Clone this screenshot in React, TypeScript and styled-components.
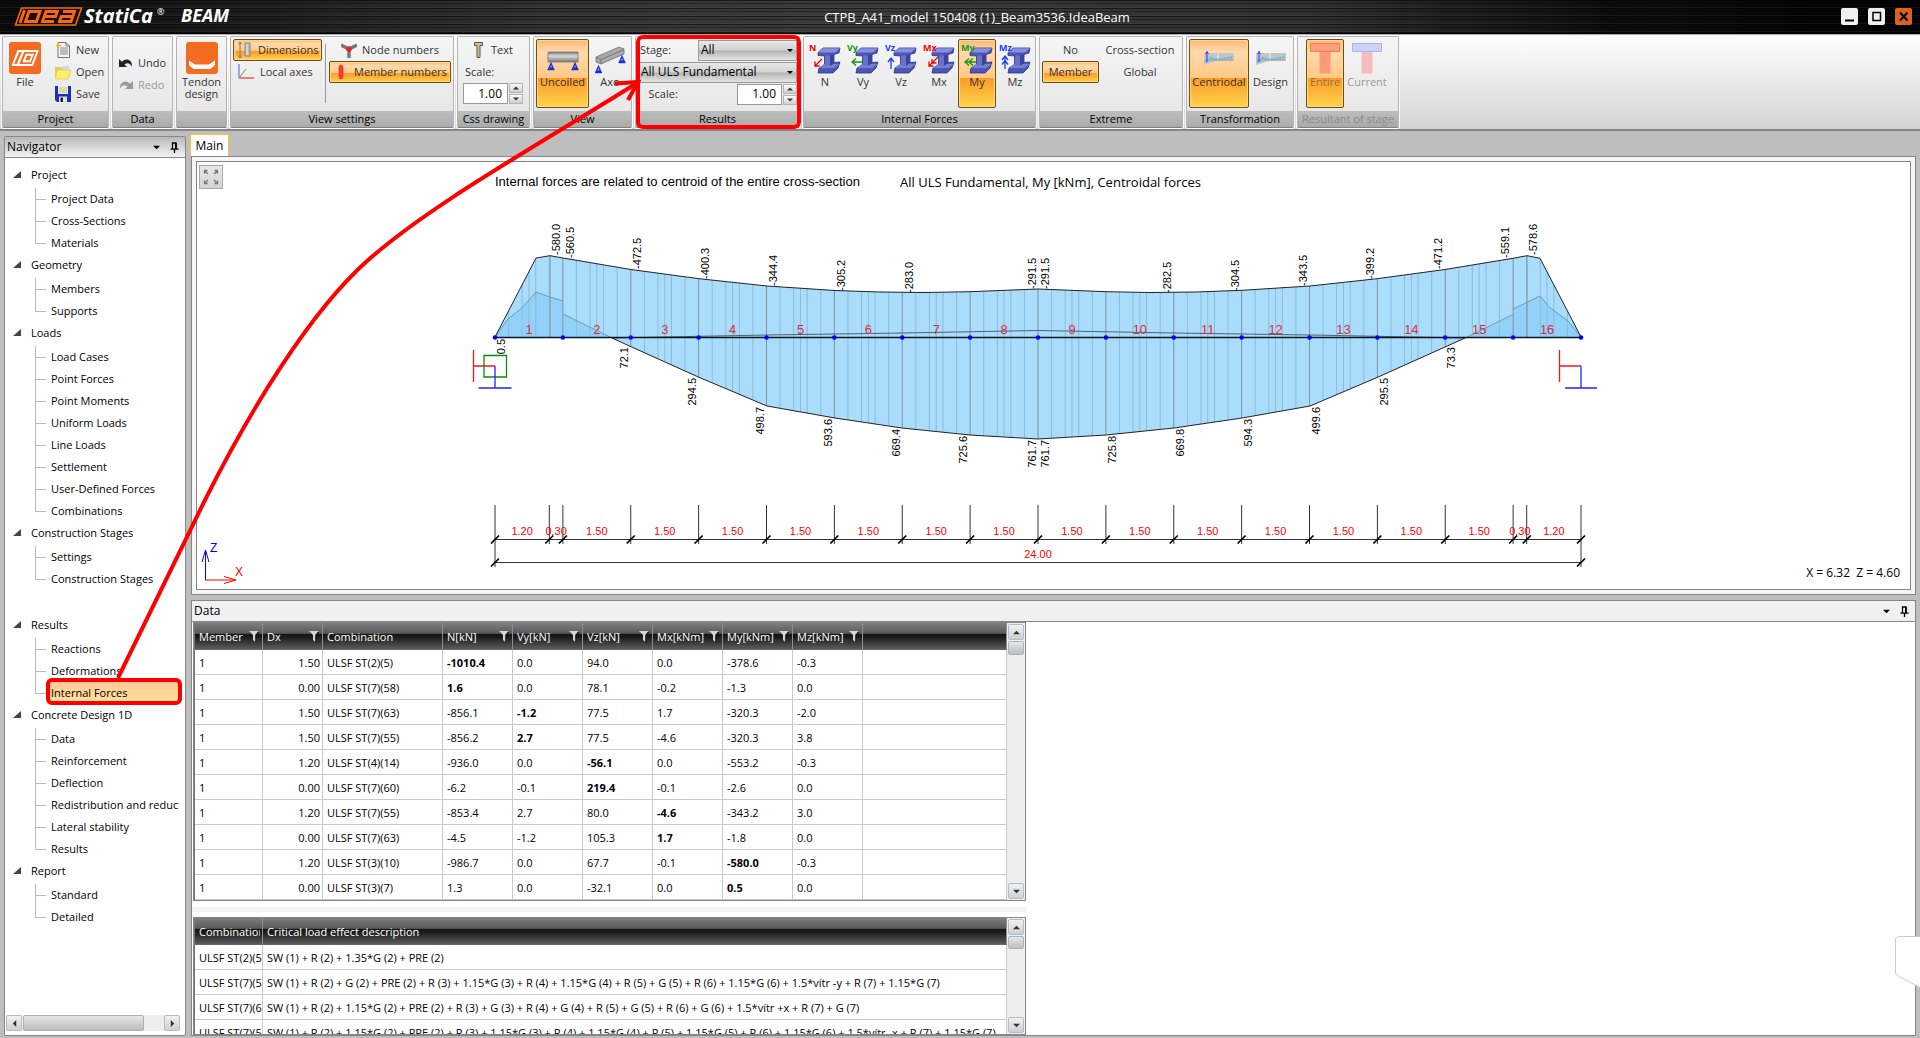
import React from "react";
import styled, { createGlobalStyle, css } from "styled-components";

const ui = `"Segoe UI", "Open Sans", "Noto Sans", sans-serif`;
const plain = `"Liberation Sans", Arial, sans-serif`;
const line = "#868686";

const Global = createGlobalStyle`
  *, *::before, *::after { box-sizing: border-box; }
  body { margin: 0; background: #bebebe; font: 12px/16px ${ui}; color: #000; }
  button, input, select { font: inherit; color: inherit; margin: 0; padding: 0; border: 0; background: none; border-radius: 0; }
  ul, h2 { margin: 0; padding: 0; list-style: none; font: inherit; }
`;

const Window = styled.div`
  position: relative;
  display: flex;
  flex-direction: column;
  height: 100vh;
  overflow: hidden;
`;

/* ---------- title bar ---------- */
const TitleBar = styled.header`
  flex: none;
  display: grid;
  grid-template-columns: 1fr auto 1fr;
  align-items: center;
  height: 34px;
  padding: 0 8px 0 14px;
  border-bottom: 1px solid #000;
  color: #fff;
  background:
    repeating-linear-gradient(180deg, rgba(0,0,0,.55) 0 1px, transparent 1px 3px, rgba(0,0,0,.35) 3px 4px, transparent 4px 7px, rgba(120,120,120,.12) 7px 8px),
    linear-gradient(90deg, #0a0a0a 0%, #1c1c1c 12%, #343434 30%, #3b3b3b 45%, #333 60%, #303030 68%, #0c0c0c 84%, #020202 100%);
`;
const Brand = styled.div`
  display: flex;
  align-items: center;
  height: 33px;
  svg { overflow: visible; }
`;
const FileName = styled.div`
  padding-left: 28px;
  font-size: 13px;
  white-space: nowrap;
`;
const WindowButtons = styled.div`
  display: flex;
  justify-content: flex-end;
  gap: 10px;
`;
const WindowButton = styled.button<{ $close?: boolean }>`
  width: 17px;
  height: 17px;
  border-radius: 2px;
  background: ${(p) => (p.$close ? "#dc6120" : "#f0f0f0")};
  svg { display: block; }
`;

/* ---------- ribbon ---------- */
const Ribbon = styled.nav`
  flex: none;
  display: flex;
  gap: 3px;
  height: 97px;
  padding: 1px 2px 2px;
  border-top: 1px solid #aaa;
  border-bottom: 2px solid #858585;
  background: linear-gradient(#fff, #d4d4d4);
`;
const Group = styled.section<{ $w: number }>`
  display: flex;
  flex-direction: column;
  flex: none;
  width: ${(p) => p.$w}px;
  height: 92px;
  border: 1px solid #b4b4b4;
  border-bottom-color: #808080;
  border-radius: 2px;
  box-shadow: 0 0 0 1px #fafafa;
  background: linear-gradient(#f5f5f5, #e6e4e4);
`;
const GroupBody = styled.div<{ $pad?: string }>`
  display: flex;
  flex: 1;
  min-height: 0;
  padding: ${(p) => p.$pad || "2px"};
`;
const GroupLabel = styled.h2<{ $off?: boolean }>`
  flex: none;
  height: 16px;
  font-size: 11px;
  text-align: center;
  white-space: nowrap;
  color: ${(p) => (p.$off ? "#8a8a8a" : "#000")};
  background: linear-gradient(#bcbebd, #a9abaa);
`;
const active = css`
  border-color: #6a4d25;
  box-shadow: inset 0 0 0 1px #ffd97a;
  background: linear-gradient(#f7b878 0, #ffd9ae 18%, #ffca85 56%, #ff9a26 57%, #ffd54c 100%);
`;
const BigButton = styled.button<{ $w: number; $on?: boolean; $off?: boolean }>`
  display: flex;
  flex-direction: column;
  align-items: center;
  flex: none;
  width: ${(p) => p.$w}px;
  height: 69px;
  padding-top: 2px;
  border: 1px solid transparent;
  border-radius: 2px;
  font-size: 11px;
  line-height: 12px;
  color: ${(p) => (p.$off ? (p.$on ? "#94723f" : "#999") : "#333")};
  ${(p) => p.$on && active}
  svg { display: block; width: 32px; height: 32px; margin-bottom: 2px; flex: none; overflow: visible; }
`;
const SmallButton = styled.button<{ $on?: boolean; $off?: boolean; $center?: boolean }>`
  display: flex;
  align-items: center;
  justify-content: ${(p) => (p.$center ? "center" : "flex-start")};
  gap: 5px;
  height: 22px;
  padding: 0 3px;
  border: 1px solid transparent;
  border-radius: 2px;
  font-size: 11px;
  white-space: nowrap;
  color: ${(p) => (p.$off ? "#999" : "#333")};
  ${(p) => p.$on && active}
  svg { display: block; flex: none; }
`;
const Stack = styled.div<{ $w?: number; $center?: boolean }>`
  display: flex;
  flex-direction: column;
  flex: none;
  ${(p) => p.$w && `width: ${p.$w}px;`}
  ${(p) => p.$center && "justify-content: center;"}
`;
const Rule = styled.div`
  width: 1px;
  height: 59px;
  margin: 5px 3px 0;
  background: #999;
`;
const Line = styled.div`
  display: flex;
  align-items: center;
  justify-content: space-between;
  height: 22px;
`;
const FieldLabel = styled.label`
  padding-left: 2px;
  font-size: 11px;
  color: #333;
`;
const SpinBox = styled.div`
  display: flex;
  gap: 1px;
  height: 21px;
`;
const NumberInput = styled.input`
  width: 45px;
  padding-right: 5px;
  border: 1px solid #999;
  background: #fff;
  text-align: right;
`;
const Spinners = styled.div`
  display: flex;
  flex-direction: column;
  gap: 1px;
`;
const Spin = styled.button`
  display: grid;
  place-items: center;
  width: 14px;
  height: 10px;
  border: 1px solid #b5b5b5;
  background: linear-gradient(#fafafa, #cfcfcf);
`;
const SelectBox = styled.div<{ $w: number }>`
  position: relative;
  width: ${(p) => p.$w}px;
  height: 21px;
  select {
    appearance: none;
    width: 100%;
    height: 100%;
    padding-left: 2px;
    border: 1px solid #999;
    background: linear-gradient(#e8e8e8 0, #d2d2d2 48%, #b4b4b4 52%, #e4e4e4 100%);
  }
  &::after {
    content: "";
    position: absolute;
    right: 4px;
    top: 9px;
    border: 3px solid transparent;
    border-top-color: #000;
    pointer-events: none;
  }
`;

/* ---------- workspace ---------- */
const Workspace = styled.div`
  display: flex;
  flex: 1;
  min-height: 0;
  gap: 5px;
  padding: 3px 4px 2px 4px;
`;
const Navigator = styled.aside`
  display: flex;
  flex-direction: column;
  flex: none;
  width: 182px;
  margin-top: 2px;
  border: 1px solid ${line};
  border-radius: 2px;
  background: #fff;
`;
const PanelHead = styled.div<{ $dark?: boolean }>`
  display: flex;
  align-items: center;
  flex: none;
  gap: 10px;
  height: 21px;
  padding: 0 6px 0 2px;
  border-bottom: 1px solid ${line};
  background: ${(p) => (p.$dark ? "linear-gradient(#b8b8b8, #f4f4f4)" : "#f0f0f0")};
  h2 { flex: 1; }
`;
const HeadButton = styled.button`
  display: block;
  svg { display: block; }
`;
const Tree = styled.ul`
  flex: 1;
  min-height: 0;
  padding-top: 6px;
  overflow: hidden;
`;
const Branch = styled.li<{ $space?: boolean }>`
  margin-top: ${(p) => (p.$space ? 24 : 0)}px;
`;
const BranchTitle = styled.div`
  display: flex;
  align-items: center;
  gap: 10px;
  height: 24px;
  padding: 0 0 2px 8px;
  font-size: 11px;
  svg { display: block; }
`;
const Leaf = styled.li<{ $on?: boolean }>`
  display: flex;
  align-items: center;
  height: 22px;
  margin-left: 30px;
  border-left: 1px solid #bbb;
  font-size: 11px;
  white-space: nowrap;
  overflow: hidden;
  &::before { content: ""; width: 10px; height: 1px; background: #bbb; flex: none; }
  &:last-child {
    border-left: 0;
    background: linear-gradient(#bbb, #bbb) 0 0 / 1px 11px no-repeat;
    &::before { width: 11px; }
  }
  a {
    flex: 1;
    height: 22px;
    margin: 0 6px 0 1px;
    padding-left: 4px;
    line-height: 21px;
    color: #000;
    text-decoration: none;
    overflow: hidden;
    background: ${(p) => (p.$on ? "linear-gradient(#ffc999, #ffe599)" : "none")};
  }
`;
const HScroll = styled.div`
  display: flex;
  flex: none;
  gap: 1px;
  height: 16px;
  margin: 0 5px 4px 1px;
  background: #eee;
`;
const VScroll = styled.div`
  display: flex;
  flex-direction: column;
  flex: none;
  gap: 1px;
  width: 18px;
  padding: 1px;
  background: #eee;
`;
const ScrollButton = styled.button`
  display: grid;
  place-items: center;
  flex: none;
  width: 16px;
  height: 16px;
  border: 1px solid #b0bccf;
  border-radius: 2px;
  background: linear-gradient(#f2f2f2, #cfcfcf);
`;
const Thumb = styled.div<{ $w: number; $h: number }>`
  width: ${(p) => p.$w}px;
  height: ${(p) => p.$h}px;
  border: 1px solid #a9b1bf;
  border-radius: 2px;
  background: linear-gradient(#e6e6e6, #bdbdbd);
`;
const Spacer = styled.div`
  flex: 1;
`;

const Content = styled.main`
  display: flex;
  flex-direction: column;
  flex: 1;
  min-width: 0;
`;
const Tab = styled.button`
  flex: none;
  align-self: flex-start;
  width: 39px;
  height: 22px;
  margin-left: -1px;
  border: 1px solid #fac42d;
  border-bottom: 0;
  border-radius: 2px 2px 0 0;
  background: #fff;
`;
const MainPanel = styled.section`
  display: flex;
  flex: 1;
  min-height: 0;
  padding: 4px;
  border: 1px solid ${line};
  background: #f6f6f6;
`;
const Canvas = styled.div`
  position: relative;
  flex: 1;
  min-width: 0;
  border: 1px solid ${line};
  background: #fff;
  overflow: hidden;
  > svg { display: block; width: 100%; height: 100%; }
`;
const FitButton = styled.button`
  position: absolute;
  left: 2px;
  top: 3px;
  width: 24px;
  height: 24px;
  border: 1px solid #aaa;
  background: linear-gradient(#e8e8e8, #d4d4d4);
  svg { display: block; margin: auto; }
`;
const Coordinates = styled.output`
  position: absolute;
  right: 10px;
  bottom: 8px;
  white-space: pre;
`;
const DataPanel = styled.section`
  display: flex;
  flex-direction: column;
  flex: none;
  height: 436px;
  margin-top: 5px;
  border: 1px solid ${line};
  background: #fff;
`;
const Grids = styled.div`
  display: flex;
  flex-direction: column;
  flex: 1;
  min-height: 0;
  width: 835px;
`;
const GridFrame = styled.div<{ $h?: number }>`
  display: flex;
  flex: ${(p) => (p.$h ? `0 0 ${p.$h}px` : "1")};
  min-height: 0;
  margin: 0 1px;
  border: 1px solid ${line};
`;
const Clip = styled.div`
  flex: 1;
  min-width: 0;
  overflow: hidden;
  border-left: 1px solid #777;
`;
const Splitter = styled.div`
  flex: none;
  height: 5px;
  margin: 6px 0 5px;
  background: #f4f4f4;
`;
const Table = styled.table`
  width: 100%;
  table-layout: fixed;
  border-collapse: separate;
  border-spacing: 0;
  font-size: 11px;
`;
const Th = styled.th<{ $w?: number }>`
  ${(p) => p.$w && `width: ${p.$w}px;`}
  height: 27px;
  padding: 1px 2px 0 4px;
  border-right: 1px solid #8e8e8e;
  border-bottom: 1px solid #666;
  color: #fff;
  font-weight: 400;
  text-align: left;
  white-space: nowrap;
  overflow: hidden;
  background: linear-gradient(#7e7e7e 0, #5a5a5a 40%, #141414 42%, #1c1c1c 55%, #5c5c5c 100%);
`;
const HeadCell = styled.div`
  display: flex;
  align-items: center;
  justify-content: space-between;
  overflow: hidden;
  svg { flex: none; }
`;
const Td = styled.td<{ $right?: boolean; $strong?: boolean }>`
  height: 25px;
  padding: 2px 2px 0 4px;
  border-right: 1px solid #c9c9c9;
  border-bottom: 1px solid #c9c9c9;
  text-align: ${(p) => (p.$right ? "right" : "left")};
  font-weight: ${(p) => (p.$strong ? 700 : 400)};
  white-space: nowrap;
  overflow: hidden;
`;
const Markup = styled.svg`
  position: absolute;
  left: 0;
  top: 0;
  pointer-events: none;
`;
const SideTab = styled.svg`
  position: absolute;
  right: 0;
  bottom: 50px;
`;

/* ---------- icons ---------- */
const Tri = ({ d = "down", s = 7, c = "#333" }: { d?: string; s?: number; c?: string }) => {
  const paths: Record<string, string> = { down: "M0 2H8L4 6Z", up: "M0 6H8L4 2Z", left: "M6 0V8L2 4Z", right: "M2 0V8L6 4Z" };
  return <svg width={s} height={s} viewBox="0 0 8 8"><path d={paths[d]} fill={c} /></svg>;
};
const Pin = () => (
  <svg width="9" height="11" viewBox="0 0 9 11"><path d="M2.5 7V1H6V7M0.5 7.2H8.5M4.5 7V11" fill="none" stroke="#000" strokeWidth="1.3" /><path d="M5 1H6.8V7H5Z" fill="#000" /></svg>
);
const FunnelIcon = () => (
  <svg width="11" height="12" viewBox="0 0 11 12"><path d="M1 1H10.5L7.2 5V12L5 10V5Z" fill="#111" /><path d="M0 0H9.5L6.2 4V11L4 9V4Z" fill="#d5d5d5" /></svg>
);
const Logo = () => (
  <svg width="222" height="33" viewBox="14 0 222 33">
    <path d="M21.5 8H81.5L75.5 25H15.5Z" fill="#180800" stroke="#f36a10" strokeWidth="1.6" />
    <g fill="none" stroke="#f36a10" strokeWidth="3" strokeLinejoin="miter">
      <path d="M24.5 10L20 23" />
      <path d="M29 11.5H40L36.5 21.5H25.5Z" />
      <path d="M43.5 16.5H55.5L57.2 11.5H46L42.5 21.5H54" />
      <path d="M63 11.5H74.5L71 21.5H59.5L61.2 16.5H72" />
    </g>
    <text x="84" y="23" fontFamily={ui} fontSize="20" fontWeight="700" fontStyle="italic" fill="#fff">StatiCa</text>
    <text x="157" y="15" fontFamily={ui} fontSize="9" fill="#fff">®</text>
    <text x="181" y="22" fontFamily={ui} fontSize="18" fontWeight="700" fontStyle="italic" fill="#fff">BEAM</text>
  </svg>
);
const FileIcon = () => (
  <svg viewBox="0 0 32 32"><rect width="32" height="32" rx="3" fill="#f36c21" /><path d="M8.5 8H30L24 24H2.5Z" fill="#fff" /><path d="M10.3 10L5.2 22H7.8L12.8 10Z" fill="#f36c21" /><path d="M15.2 10H27.3L22.7 22H10.3Z" fill="#f36c21" /><path d="M17.4 12.8H23.6L21 19.3H14.8Z" fill="#f36c21" stroke="#fff" strokeWidth="2" /></svg>
);
const TendonIcon = () => (
  <svg viewBox="0 0 32 32"><rect width="32" height="32" rx="3" fill="#f36c21" /><path d="M3 18.5L9 22.5H23L29 18.5V23L24.5 27H7.5L3 23Z" fill="#fff" /></svg>
);
const NewIcon = () => (
  <svg width="16" height="16" viewBox="0 0 16 16"><path d="M3 .5H11L14.5 4V15.5H3Z" fill="#f6f6f6" stroke="#777" /><path d="M5 6H13M5 8H13M5 10H13M5 12H13" stroke="#888" /><path d="M11 .5V4H14.5" fill="none" stroke="#777" /><path d="M3.5 0L4.5 2.5L7 3.5L4.5 4.5L3.5 7L2.5 4.5L0 3.5L2.5 2.5Z" fill="#ffae2b" /></svg>
);
const OpenIcon = () => (
  <svg width="16" height="16" viewBox="0 0 16 16"><path d="M0 3H6L7 4H14V14H0Z" fill="#e5cf5a" /><path d="M7 2H14V6H7Z" fill="#d8d8ec" /><path d="M2.5 6H16L13 15H0Z" fill="#fdf06a" stroke="#d8c24b" strokeWidth=".6" /></svg>
);
const SaveIcon = () => (
  <svg width="16" height="16" viewBox="0 0 16 16"><path d="M0 0H16V16H2L0 14Z" fill="#1b2fc4" /><path d="M3 0H13V8H3Z" fill="#f1ecc9" /><path d="M4 2H12M4 4H12M4 6H12" stroke="#b9b49a" strokeWidth=".7" /><path d="M4 10.5H12V16H4Z" fill="#e4e4e4" /><path d="M5.5 11.5H8V16H5.5Z" fill="#222" /></svg>
);
const UndoIcon = ({ flip }: { flip?: boolean }) => (
  <svg width="14" height="12" viewBox="0 0 14 12"><g transform={flip ? "matrix(-1 0 0 1 14 0)" : undefined} fill={flip ? "#9a9a9a" : "#222"}><path d="M0 2V10H8L5.5 7.6C8 5.5 11 6 12.5 9.5C14.5 4.5 8 -.5 3 4.8Z" /></g></svg>
);
const DimIcon = () => (
  <svg width="16" height="18" viewBox="0 0 16 18"><path d="M3 1V17M1 3.5L3 1L5 3.5M1 14.5L3 17L5 14.5" fill="none" stroke="#777" /><path d="M8 2H13V15H8Z" fill="#b8bcc0" stroke="#888" /><path d="M10 3V14" stroke="#eee" /></svg>
);
const AxesIcon = () => (
  <svg width="18" height="16" viewBox="0 0 18 16"><path d="M2 0V14" stroke="#8080ff" strokeWidth="1.4" /><path d="M2 14H17" stroke="#e33" strokeWidth="1.2" /><path d="M2 14L9 5" stroke="#6b6" strokeWidth="1.2" /></svg>
);
const NodeIcon = () => (
  <svg width="16" height="16" viewBox="0 0 16 16"><path d="M0 3L8 7L16 3M8 7V16" fill="none" stroke="#777" strokeWidth="3.4" /><circle cx="8" cy="7" r="2.8" fill="#f02020" /></svg>
);
const MemberIcon = () => (
  <svg width="16" height="16" viewBox="0 0 16 16"><rect x="6" y="1" width="4" height="14" rx="2" fill="#ff3b2b" stroke="#d22" strokeWidth=".6" /></svg>
);
const TextIcon = () => (
  <svg width="9" height="16" viewBox="0 0 9 16"><path d="M.5 .5H8.5V3.5H6V15.5H3V3.5H.5Z" fill="#d9bf8c" stroke="#555" /></svg>
);
const Foot = ({ x, y }: { x: number; y: number }) => (
  <g transform={`translate(${x} ${y})`} fill="none" stroke="#1c2fe0" strokeWidth="1.5"><path d="M3.5 .5L1.5 5H5.5Z M0 6.5H7" /></g>
);
const UncoiledIcon = () => (
  <svg viewBox="0 0 32 32"><defs><linearGradient id="pipe" x1="0" x2="0" y1="0" y2="1"><stop offset="0" stopColor="#777" /><stop offset=".4" stopColor="#ddd" /><stop offset="1" stopColor="#777" /></linearGradient></defs><path d="M1 10H31V20H1Z" fill="url(#pipe)" stroke="#777" strokeWidth=".8" /><Foot x={0.5} y={21} /><Foot x={24.5} y={21} /></svg>
);
const AxoIcon = () => (
  <svg viewBox="0 0 32 32"><path d="M2 15L25 5L30 7V12L7 22L2 20Z" fill="#a9a9a9" stroke="#666" strokeWidth=".7" /><path d="M2 15L7 17.5L30 7.5M7 17.5V22" fill="none" stroke="#666" strokeWidth=".7" /><Foot x={24.5} y={14} /><Foot x={1} y={24} /></svg>
);
const arrows: Record<string, React.ReactNode> = {
  diag: <path d="M13 17L6 24M6 19.5V24H10.5" />,
  diag2: <path d="M15 15L6 24M6 19.5V24H10.5M9 17V21H13.5" />,
  left: <path d="M16 20H5M9 16.5L5 20L9 23.5" />,
  left2: <path d="M16 20H4M8 16.5L4 20L8 23.5M12 16.5L8 20L12 23.5" />,
  up: <path d="M6 27V16M3 20L6 16L9 20" />,
  up2: <path d="M6 27V14M3 18L6 14L9 18M3 22.5L6 18.5L9 22.5" />,
};
const ForceIcon = ({ n, c, a }: { n: string; c: string; a: string }) => (
  <svg viewBox="0 0 32 32">
    <path d="M9 10.5L14 6H31L30 11L25 12.5V20.5L31 20L29 26L24 31H9L10 26L15.5 22.5V14L9 13.5Z" fill="#4c56b4" stroke="#2c3488" strokeWidth=".8" />
    <path d="M9 10.5L14 6.2H31L26 10.5Z" fill="#8690de" />
    <path d="M10 26L15 22H30.500L25.500 26Z" fill="#7680d2" />
    <path d="M16 13.500H21V24H16Z" fill="#6872c8" />
    <path d="M21 13.500L25 12V21L21 24Z" fill="#39429c" />
    <text x="0" y="9" fontFamily={ui} fontSize="9" fontWeight="700" fill={c}>{n}</text>
    <g fill="none" stroke={c} strokeWidth="1.3">{arrows[a]}</g>
  </svg>
);
const StressIcon = () => (
  <svg viewBox="0 0 32 32"><path d="M1 11H31V19L15 18.5L1 23Z" fill="#c4c4c4" /><path d="M15 11V19" stroke="#eee" /><path d="M2 18H30" stroke="#e66" strokeWidth=".7" /><path d="M2 20L8 16L15 18L30 15" fill="none" stroke="#3cc8ea" strokeWidth="2.2" strokeDasharray="2 1" /><path d="M4 20V9.500M2.500 12L4 9.500L5.500 12" fill="none" stroke="#33f" /></svg>
);
const TeeIcon = ({ top, web, edge }: { top: string; web: string; edge: string }) => (
  <svg viewBox="0 0 32 32"><path d="M11 9H21V31H11Z" fill={web} stroke={web} /><path d="M1.5 1.5H30.5V9.5H1.5Z" fill={top} stroke={edge} /></svg>
);
const FitIcon = () => (
  <svg width="16" height="16" viewBox="0 0 16 16" fill="none" stroke="#777" strokeWidth="1.3"><path d="M5 5L1.500 1.500M1.500 4.500V1.500H4.500M11 5L14.500 1.500M11.500 1.500H14.500V4.500M5 11L1.500 14.500M1.500 11.500V14.500H4.500M11 11L14.500 14.500M14.500 11.500V14.500H11.500" /></svg>
);

/* ---------- moment diagram ---------- */
type P = [number, number];
const X0 = 495;
const M = 45.25;
const axisY = 337.5;
const upper: P[] = [[495,337],[536,258],[550,255.7],[563,258],[631,269.5],[699,278.7],[767,286],[835,290.5],[880,292],[925,292.5],[970,291.7],[1038,289],[1106,291.7],[1150,292.5],[1196,292],[1242,290.3],[1310,286],[1377,278.7],[1445,269.5],[1513,258.3],[1527,255.7],[1540,258.3],[1581,337]];
const lower: P[] = [[495,337.5],[612,338],[631,346.7],[699,377.3],[767,406],[835,418],[902,428],[970,435],[1038,439],[1106,435],[1174,428],[1242,418],[1310,406],[1377,377.5],[1445,347],[1465,338],[1581,337.5]];
const leftMin: P[] = [[495,337],[508,319],[522,308],[536,292],[550,297],[563,301]];
const leftTail: P[] = [[563,314],[612,338]];
const rightTail: P[] = [[1465,338],[1513,314.5]];
const rightMin: P[] = [[1513,309],[1540,296],[1549,307],[1568,321],[1581,337]];
const pts = (a: P[]) => a.map((p) => p.join(",")).join(" ");
const at = (a: P[], x: number) => {
  for (let i = 1; i < a.length; i++) {
    if (x <= a[i][0]) {
      const [x1, y1] = a[i - 1];
      const [x2, y2] = a[i];
      return y1 + ((y2 - y1) * (x - x1)) / (x2 - x1);
    }
  }
  return a[a.length - 1][1];
};
const nodes = Array.from({ length: 17 }, (_, i) => X0 + i * 1.5 * M);
const stations = nodes.slice(0, 16).flatMap((x) => [0.2, 0.4, 0.5, 0.6, 0.8].map((f) => x + f * 1.5 * M));
const topLabels: [string, number, number][] = [
  ["-580.0",560,255],["-560.5",574,258],["-472.5",641,269],["-400.3",709,279],["-344.4",777,286],["-305.2",845,291],["-283.0",913,293],["-291.5",1036,289],["-291.5",1049,289],["-282.5",1171,293],["-304.5",1239,291],["-343.5",1307,286],["-399.2",1374,279],["-471.2",1442,269],["-559.1",1509,258],["-578.6",1537,255],
];
const bottomLabels: [string, number, number][] = [
  ["0.5",505,339],["72.1",628,347],["294.5",696,378],["498.7",764,407],["593.6",832,419],["669.4",900,429],["725.6",967,436],["761.7",1036,440],["761.7",1049,440],["725.8",1116,436],["669.8",1184,429],["594.3",1252,419],["499.6",1320,407],["295.5",1388,378],["73.3",1455,347],
];
const dims = [1.2, 0.3, ...Array(14).fill(1.5), 0.3, 1.2] as number[];
const dimX = dims.reduce<number[]>((a, d) => [...a, a[a.length - 1] + d * M], [X0]);

const Diagram = () => (
  <svg viewBox="197 162 1713 427" preserveAspectRatio="xMidYMid meet" fontFamily={plain}>
    <text x="495" y="186" fontSize="13">Internal forces are related to centroid of the entire cross-section</text>
    <text x="900" y="187" fontFamily={ui} fontSize="13">All ULS Fundamental, My [kNm], Centroidal forces</text>
    <polygon points={pts([...upper, ...[...lower].reverse()])} fill="#aadcfc" />
    <polygon points={pts([...leftMin, ...leftTail, [495, 338]])} fill="#92d2fa" />
    <polygon points={pts([...rightTail, ...rightMin, [1581, 338]])} fill="#92d2fa" />
    <g stroke="#8cbcd8">
      {stations.map((x, i) => <line key={i} x1={x} x2={x} y1={at(upper, x)} y2={at(lower, x)} />)}
    </g>
    <g stroke="#7f93a0">
      {[550, ...nodes.slice(1, 16), 1527].map((x, i) => <line key={i} x1={x} x2={x} y1={at(upper, x)} y2={at(lower, x)} />)}
    </g>
    <g fill="none" stroke="#6f9ab2">
      {[leftMin, leftTail, rightTail, rightMin].map((a, i) => <polyline key={i} points={pts(a)} />)}
    </g>
    <polyline points="612,338 767,335 902,333 1038,330.5 1174,333 1310,335 1465,338" fill="none" stroke="#51636e" />
    <polyline points={pts(upper)} fill="none" stroke="#222" />
    <polyline points={pts(lower.slice(1, -1))} fill="none" stroke="#222" />
    <line x1="495" x2="1581" y1={axisY} y2={axisY} stroke="#0a1420" strokeWidth="1.5" />
    {nodes.map((x) => <circle key={x} cx={x} cy={axisY} r="2.3" fill="#00f" />)}
    <g fill="#dd2c3c" fontSize="13" textAnchor="middle">
      {nodes.slice(0, 16).map((x, i) => <text key={i} x={x + 34} y="334">{i + 1}</text>)}
    </g>
    <g fontSize="11">
      {topLabels.map(([t, x, y]) => <text key={x} transform={`translate(${x} ${y}) rotate(-90)`}>{t}</text>)}
      <g textAnchor="end">
        {bottomLabels.map(([t, x, y]) => <text key={x} transform={`translate(${x} ${y}) rotate(-90)`}>{t}</text>)}
      </g>
    </g>
    <g fill="none" strokeWidth="1.3">
      <path d="M473.5 350V382M473.5 366H495M1559.5 350V382M1559.5 366H1581" stroke="#f01818" />
      <path d="M484 355.5H506.5V377H484Z" stroke="#0a8a0a" />
      <path d="M495 366V388M478.5 388H511.5M1581 366V388M1565 388H1597" stroke="#22f" />
    </g>
    <g stroke="#333">
      {dimX.map((x, i) => <line key={i} x1={x} x2={x} y1="505" y2="544" />)}
      <path d="M495 539.5H1581M495 562.5H1581M495 544V567M1581 544V567" />
    </g>
    <g stroke="#000" strokeWidth="1.7">
      {dimX.map((x, i) => <line key={i} x1={x - 4} x2={x + 4} y1="543.5" y2="535.5" />)}
      <path d="M491 566.5L499 558.5M1577 566.5L1585 558.5" />
    </g>
    <g fill="#f00" fontSize="11" textAnchor="middle">
      {dims.map((d, i) => <text key={i} x={(dimX[i] + dimX[i + 1]) / 2} y="535">{d.toFixed(2)}</text>)}
      <text x="1038" y="558">24.00</text>
    </g>
    <g fill="none">
      <path d="M205.5 580V551M202 562L205.5 550L209 562" stroke="#00f" />
      <path d="M205 580H235M224 576.5L236 580L224 583.5" stroke="#f00" />
      <text x="210" y="552" fontSize="12" fill="#00f">Z</text>
      <text x="235" y="576" fontSize="12" fill="#f00">X</text>
    </g>
  </svg>
);

/* ---------- data ---------- */
const tree: { name: string; space?: boolean; items: string[] }[] = [
  { name: "Project", items: ["Project Data", "Cross-Sections", "Materials"] },
  { name: "Geometry", items: ["Members", "Supports"] },
  { name: "Loads", items: ["Load Cases", "Point Forces", "Point Moments", "Uniform Loads", "Line Loads", "Settlement", "User-Defined Forces", "Combinations"] },
  { name: "Construction Stages", items: ["Settings", "Construction Stages"] },
  { name: "Results", space: true, items: ["Reactions", "Deformations", "Internal Forces"] },
  { name: "Concrete Design 1D", items: ["Data", "Reinforcement", "Deflection", "Redistribution and reduction", "Lateral stability", "Results"] },
  { name: "Report", items: ["Standard", "Detailed"] },
];
const columns: [string, number, boolean][] = [
  ["Member", 68, true], ["Dx", 60, true], ["Combination", 120, false], ["N[kN]", 70, true], ["Vy[kN]", 70, true],
  ["Vz[kN]", 70, true], ["Mx[kNm]", 70, true], ["My[kNm]", 70, true], ["Mz[kNm]", 70, true],
];
const rows: { cells: string[]; strong: number }[] = [
  { cells: ["1", "1.50", "ULSF ST(2)(5)", "-1010.4", "0.0", "94.0", "0.0", "-378.6", "-0.3"], strong: 3 },
  { cells: ["1", "0.00", "ULSF ST(7)(58)", "1.6", "0.0", "78.1", "-0.2", "-1.3", "0.0"], strong: 3 },
  { cells: ["1", "1.50", "ULSF ST(7)(63)", "-856.1", "-1.2", "77.5", "1.7", "-320.3", "-2.0"], strong: 4 },
  { cells: ["1", "1.50", "ULSF ST(7)(55)", "-856.2", "2.7", "77.5", "-4.6", "-320.3", "3.8"], strong: 4 },
  { cells: ["1", "1.20", "ULSF ST(4)(14)", "-936.0", "0.0", "-56.1", "0.0", "-553.2", "-0.3"], strong: 5 },
  { cells: ["1", "0.00", "ULSF ST(7)(60)", "-6.2", "-0.1", "219.4", "-0.1", "-2.6", "0.0"], strong: 5 },
  { cells: ["1", "1.20", "ULSF ST(7)(55)", "-853.4", "2.7", "80.0", "-4.6", "-343.2", "3.0"], strong: 6 },
  { cells: ["1", "0.00", "ULSF ST(7)(63)", "-4.5", "-1.2", "105.3", "1.7", "-1.8", "0.0"], strong: 6 },
  { cells: ["1", "1.20", "ULSF ST(3)(10)", "-986.7", "0.0", "67.7", "-0.1", "-580.0", "-0.3"], strong: 7 },
  { cells: ["1", "0.00", "ULSF ST(3)(7)", "1.3", "0.0", "-32.1", "0.0", "0.5", "0.0"], strong: 7 },
];
const effects = [
  ["ULSF ST(2)(5)", "SW (1) + R (2) + 1.35*G (2) + PRE (2)"],
  ["ULSF ST(7)(58)", "SW (1) + R (2) + G (2) + PRE (2) + R (3) + 1.15*G (3) + R (4) + 1.15*G (4) + R (5) + G (5) + R (6) + 1.15*G (6) + 1.5*vítr -y + R (7) + 1.15*G (7)"],
  ["ULSF ST(7)(63)", "SW (1) + R (2) + 1.15*G (2) + PRE (2) + R (3) + G (3) + R (4) + G (4) + R (5) + G (5) + R (6) + G (6) + 1.5*vítr +x + R (7) + G (7)"],
  ["ULSF ST(7)(55)", "SW (1) + R (2) + 1.15*G (2) + PRE (2) + R (3) + 1.15*G (3) + R (4) + 1.15*G (4) + R (5) + 1.15*G (5) + R (6) + 1.15*G (6) + 1.5*vítr -x + R (7) + 1.15*G (7)"],
];
const forces: [string, string, string][] = [
  ["N", "#f00000", "diag"], ["Vy", "#0a9a0a", "left"], ["Vz", "#1a3cff", "up"], ["Mx", "#f00000", "diag2"], ["My", "#0a9a0a", "left2"], ["Mz", "#1a3cff", "up2"],
];

const Spinner = ({ id }: { id: string }) => (
  <SpinBox>
    <NumberInput id={id} defaultValue="1.00" />
    <Spinners>
      <Spin aria-label="Increase"><Tri d="up" s={6} /></Spin>
      <Spin aria-label="Decrease"><Tri s={6} /></Spin>
    </Spinners>
  </SpinBox>
);
const Scrollbar = ({ h }: { h: number }) => (
  <VScroll>
    <ScrollButton aria-label="Scroll up"><Tri d="up" /></ScrollButton>
    <Thumb $w={16} $h={h} />
    <Spacer />
    <ScrollButton aria-label="Scroll down"><Tri /></ScrollButton>
  </VScroll>
);

export default function App() {
  return (
    <Window>
      <Global />
      <TitleBar>
        <Brand><Logo /></Brand>
        <FileName>CTPB_A41_model 150408 (1)_Beam3536.IdeaBeam</FileName>
        <WindowButtons>
          <WindowButton aria-label="Minimize"><svg width="17" height="17"><path d="M4 12.5H13" stroke="#000" strokeWidth="2" /></svg></WindowButton>
          <WindowButton aria-label="Maximize"><svg width="17" height="17"><path d="M5 4.5H12.5V12.5H5Z" fill="none" stroke="#000" strokeWidth="1.5" /></svg></WindowButton>
          <WindowButton $close aria-label="Close"><svg width="17" height="17"><path d="M5 4.5L12.5 12.5M12.5 4.5L5 12.5" stroke="#000" strokeWidth="2" /></svg></WindowButton>
        </WindowButtons>
      </TitleBar>

      <Ribbon>
        <Group $w={107}>
          <GroupBody>
            <BigButton $w={40}><FileIcon />File</BigButton>
            <Rule />
            <Stack>
              <SmallButton><NewIcon />New</SmallButton>
              <SmallButton><OpenIcon />Open</SmallButton>
              <SmallButton><SaveIcon />Save</SmallButton>
            </Stack>
          </GroupBody>
          <GroupLabel>Project</GroupLabel>
        </Group>
        <Group $w={61}>
          <GroupBody>
            <Stack $center>
              <SmallButton><UndoIcon />Undo</SmallButton>
              <SmallButton $off><UndoIcon flip />Redo</SmallButton>
            </Stack>
          </GroupBody>
          <GroupLabel>Data</GroupLabel>
        </Group>
        <Group $w={51}>
          <GroupBody><BigButton $w={45}><TendonIcon />Tendon design</BigButton></GroupBody>
          <GroupLabel />
        </Group>
        <Group $w={224}>
          <GroupBody>
            <Stack $w={89}>
              <SmallButton $on><DimIcon />Dimensions</SmallButton>
              <SmallButton><AxesIcon />Local axes</SmallButton>
            </Stack>
            <Rule />
            <Stack $w={122}>
              <SmallButton $center><NodeIcon />Node numbers</SmallButton>
              <SmallButton $on><MemberIcon />Member numbers</SmallButton>
            </Stack>
          </GroupBody>
          <GroupLabel>View settings</GroupLabel>
        </Group>
        <Group $w={73}>
          <GroupBody $pad="2px 5px">
            <Stack $w={61}>
              <SmallButton $center><TextIcon />&nbsp;Text</SmallButton>
              <Line><FieldLabel htmlFor="css-scale">Scale:</FieldLabel></Line>
              <Spinner id="css-scale" />
            </Stack>
          </GroupBody>
          <GroupLabel>Css drawing</GroupLabel>
        </Group>
        <Group $w={99}>
          <GroupBody>
            <BigButton $w={53} $on><UncoiledIcon />Uncoiled</BigButton>
            <BigButton $w={42}><AxoIcon />Axo</BigButton>
          </GroupBody>
          <GroupLabel>View</GroupLabel>
        </Group>
        <Group $w={165}>
          <GroupBody>
            <Stack $w={159}>
              <Line>
                <FieldLabel htmlFor="stage">Stage:</FieldLabel>
                <SelectBox $w={99}><select id="stage"><option>All</option></select></SelectBox>
              </Line>
              <Line>
                <SelectBox $w={159}><select aria-label="Combination type"><option>All ULS Fundamental</option></select></SelectBox>
              </Line>
              <Line>
                <FieldLabel htmlFor="result-scale">&nbsp;&nbsp;&nbsp;Scale:</FieldLabel>
                <Spinner id="result-scale" />
              </Line>
            </Stack>
          </GroupBody>
          <GroupLabel>Results</GroupLabel>
        </Group>
        <Group $w={233}>
          <GroupBody>
            {forces.map(([n, c, a]) => (
              <BigButton key={n} $w={38} $on={n === "My"}><ForceIcon n={n} c={c} a={a} />{n}</BigButton>
            ))}
          </GroupBody>
          <GroupLabel>Internal Forces</GroupLabel>
        </Group>
        <Group $w={144}>
          <GroupBody>
            <Stack $w={57}>
              <SmallButton $center>No</SmallButton>
              <SmallButton $on $center>Member</SmallButton>
            </Stack>
            <Stack $w={82}>
              <SmallButton $center>Cross-section</SmallButton>
              <SmallButton $center>Global</SmallButton>
            </Stack>
          </GroupBody>
          <GroupLabel>Extreme</GroupLabel>
        </Group>
        <Group $w={108}>
          <GroupBody>
            <BigButton $w={60} $on><StressIcon />Centriodal</BigButton>
            <BigButton $w={43}><StressIcon />Design</BigButton>
          </GroupBody>
          <GroupLabel>Transformation</GroupLabel>
        </Group>
        <Group $w={102}>
          <GroupBody $pad="2px 8px">
            <BigButton $w={38} $on $off><TeeIcon top="#ffa07a" web="#ff9a78" edge="#ff7a50" />Entire</BigButton>
            <BigButton $w={46} $off><TeeIcon top="#ccd2f6" web="#f4bcbc" edge="#a9b4ef" />Current</BigButton>
          </GroupBody>
          <GroupLabel $off>Resultant of stage</GroupLabel>
        </Group>
      </Ribbon>

      <Workspace>
        <Navigator>
          <PanelHead $dark>
            <h2>Navigator</h2>
            <HeadButton aria-label="Panel menu"><Tri c="#000" /></HeadButton>
            <HeadButton aria-label="Pin panel"><Pin /></HeadButton>
          </PanelHead>
          <Tree>
            {tree.map((b) => (
              <Branch key={b.name} $space={b.space}>
                <BranchTitle><svg width="8" height="8"><path d="M8 0V7H0Z" fill="#444" /></svg>{b.name}</BranchTitle>
                <ul>
                  {b.items.map((t) => <Leaf key={t} $on={t === "Internal Forces"}><a href="#">{t}</a></Leaf>)}
                </ul>
              </Branch>
            ))}
          </Tree>
          <HScroll>
            <ScrollButton aria-label="Scroll left"><Tri d="left" /></ScrollButton>
            <Thumb $w={121} $h={16} />
            <Spacer />
            <ScrollButton aria-label="Scroll right"><Tri d="right" /></ScrollButton>
          </HScroll>
        </Navigator>

        <Content>
          <Tab>Main</Tab>
          <MainPanel>
            <Canvas>
              <Diagram />
              <FitButton aria-label="Zoom to fit"><FitIcon /></FitButton>
              <Coordinates>{"X = 6.32  Z = 4.60"}</Coordinates>
            </Canvas>
          </MainPanel>
          <DataPanel>
            <PanelHead>
              <h2>Data</h2>
              <HeadButton aria-label="Panel menu"><Tri c="#000" /></HeadButton>
              <HeadButton aria-label="Pin panel"><Pin /></HeadButton>
            </PanelHead>
            <Grids>
              <GridFrame $h={279}>
                <Clip>
                  <Table>
                    <thead>
                      <tr>
                        {columns.map(([n, w, f]) => <Th key={n} $w={w}><HeadCell>{n}{f && <FunnelIcon />}</HeadCell></Th>)}
                        <Th />
                      </tr>
                    </thead>
                    <tbody>
                      {rows.map((r, i) => (
                        <tr key={i}>
                          {r.cells.map((c, j) => <Td key={j} $right={j === 1} $strong={j === r.strong}>{c}</Td>)}
                          <Td />
                        </tr>
                      ))}
                    </tbody>
                  </Table>
                </Clip>
                <Scrollbar h={14} />
              </GridFrame>
              <Splitter />
              <GridFrame>
                <Clip>
                  <Table>
                    <thead><tr><Th $w={68}><HeadCell>Combination</HeadCell></Th><Th>Critical load effect description</Th></tr></thead>
                    <tbody>
                      {effects.map(([a, b]) => <tr key={a}><Td>{a}</Td><Td>{b}</Td></tr>)}
                    </tbody>
                  </Table>
                </Clip>
                <Scrollbar h={13} />
              </GridFrame>
            </Grids>
          </DataPanel>
        </Content>
      </Workspace>

      <SideTab width="25" height="52" viewBox="0 0 25 52">
        <path d="M25 .5H3L.5 3V37L3 40L25 51.5" fill="#fff" stroke="#c8ccd2" />
      </SideTab>
      <Markup width="820" height="720" fill="none" stroke="#f00" strokeWidth="4">
        <path d="M118 678L205 500C250 410 310 312 367 261C430 205 530 150 637 83" />
        <path d="M615 83.5L638 82L628 100" />
        <rect x="638" y="37" width="161" height="90" rx="5" />
        <rect x="48" y="680" width="132" height="23" rx="4" />
      </Markup>
    </Window>
  );
}
